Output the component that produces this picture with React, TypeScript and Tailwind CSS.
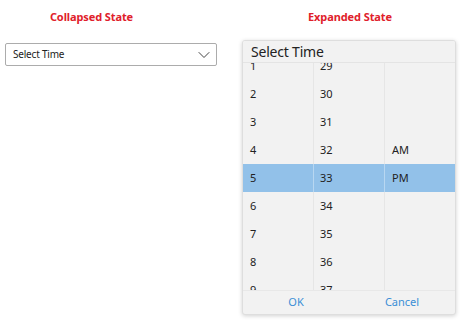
import { ChevronDown } from 'lucide-react'

const hours = ['1', '2', '3', '4', '5', '6', '7', '8', '9']
const minutes = ['29', '30', '31', '32', '33', '34', '35', '36', '37']
const periods = ['', '', '', 'AM', 'PM', '', '', '', '']

const font = { fontFamily: '"Noto Sans", "Open Sans", Arial, sans-serif' }

export default function App() {
  return (
    <div className="flex h-[326px] w-[474px] bg-white text-[#222]" style={font}>
      {/* collapsed */}
      <div className="flex flex-col">
        <div className="flex h-[34px] w-[183px] items-center justify-center text-[11px] font-bold tracking-[-0.1px] text-[#e0202a]">
          Collapsed State
        </div>
        <div className="ml-[5px] mt-[9px] flex h-[23px] w-[212px] items-center justify-between rounded-[2px] border border-[#acacac] pl-[7px] pr-[2px] text-[10px] tracking-[-0.2px]">
          <span>Select Time</span>
          <ChevronDown className="h-[20px] w-[20px] text-[#444]" strokeWidth={1.2} />
        </div>
      </div>

      {/* expanded */}
      <div className="ml-[25px] flex flex-col">
        <div className="flex h-[34px] w-[216px] items-center justify-center text-[11px] font-bold tracking-[-0.1px] text-[#e0202a]">
          Expanded State
        </div>
        <div className="mt-[6px] flex h-[275px] w-[214px] flex-col overflow-hidden rounded-[3px] border border-[#dedede] bg-[#f2f2f2] shadow-[0_1px_4px_rgba(0,0,0,0.18)]">
          <div className="relative z-10 flex h-[22px] shrink-0 items-center border-b border-[#e4e4e4] bg-[#f2f2f2] pl-[8px] text-[14px] leading-none tracking-[-0.2px]">
            Select Time
          </div>
          <div className="h-[228px] overflow-hidden">
            <div className="-mt-[11px]">
              {hours.map((h, i) => {
                const sel = i === 4
                return (
                  <div
                    key={h}
                    className={`grid h-[28px] grid-cols-[70px_71px_1fr] text-[11px] ${sel ? 'bg-[#92c1e9]' : ''}`}
                  >
                    <div className="flex items-center pl-[7px]">{h}</div>
                    <div className={`flex items-center border-l pl-[6px] ${sel ? 'border-[#b8d7f1]' : 'border-[#e6e6e6]'}`}>
                      {minutes[i]}
                    </div>
                    <div className={`flex items-center border-l pl-[7px] ${sel ? 'border-[#b8d7f1]' : 'border-[#e6e6e6]'}`}>
                      {periods[i]}
                    </div>
                  </div>
                )
              })}
            </div>
          </div>
          <div className="grid h-[24px] shrink-0 grid-cols-2 border-t border-[#e8e8e8] text-[11px] text-[#3a8fd6]">
            <div className="flex items-center justify-center">OK</div>
            <div className="flex items-center justify-center">Cancel</div>
          </div>
        </div>
      </div>
    </div>
  )
}
